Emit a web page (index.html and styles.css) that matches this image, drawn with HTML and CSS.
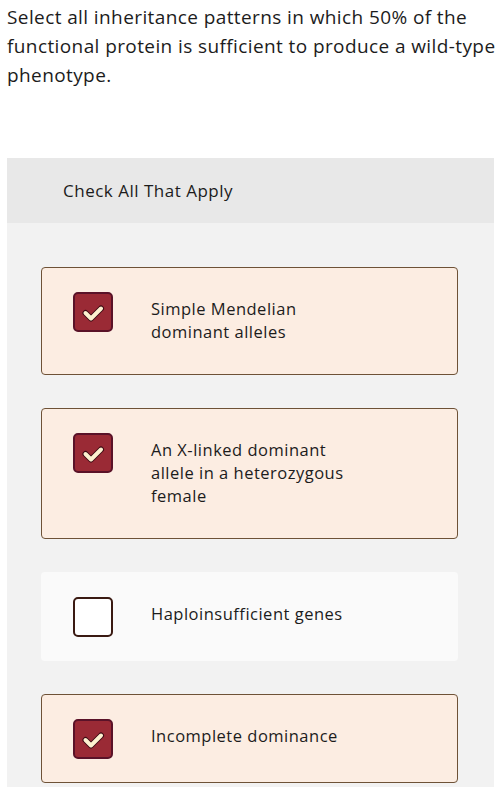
FILE: index.html
```html
<!DOCTYPE html>
<html>
<head>
<meta charset="utf-8">
<link rel="stylesheet" href="styles.css">
</head>
<body>
<p class="question">Select all inheritance patterns in which 50% of the<br>functional protein is sufficient to produce a wild-type<br>phenotype.</p>
<section class="panel">
  <div class="panel-head">Check All That Apply</div>
  <div class="panel-body">
    <div class="option checked">
      <span class="box"><svg viewBox="0 0 40 40" width="40" height="40"><polyline points="12.5,21 18,26.5 28,16.5" fill="none" stroke="#3b0a14" stroke-width="6" stroke-linecap="round" stroke-linejoin="round"/><polyline points="12.5,21 18,26.5 28,16.5" fill="none" stroke="#fdf1cf" stroke-width="4" stroke-linecap="round" stroke-linejoin="round"/></svg></span>
      <span class="label">Simple Mendelian<br>dominant alleles</span>
    </div>
    <div class="option checked">
      <span class="box"><svg viewBox="0 0 40 40" width="40" height="40"><polyline points="12.5,21 18,26.5 28,16.5" fill="none" stroke="#3b0a14" stroke-width="6" stroke-linecap="round" stroke-linejoin="round"/><polyline points="12.5,21 18,26.5 28,16.5" fill="none" stroke="#fdf1cf" stroke-width="4" stroke-linecap="round" stroke-linejoin="round"/></svg></span>
      <span class="label">An X-linked dominant<br>allele in a heterozygous<br>female</span>
    </div>
    <div class="option">
      <span class="box"></span>
      <span class="label">Haploinsufficient genes</span>
    </div>
    <div class="option checked">
      <span class="box"><svg viewBox="0 0 40 40" width="40" height="40"><polyline points="12.5,21 18,26.5 28,16.5" fill="none" stroke="#3b0a14" stroke-width="6" stroke-linecap="round" stroke-linejoin="round"/><polyline points="12.5,21 18,26.5 28,16.5" fill="none" stroke="#fdf1cf" stroke-width="4" stroke-linecap="round" stroke-linejoin="round"/></svg></span>
      <span class="label">Incomplete dominance</span>
    </div>
  </div>
</section>
</body>
</html>
```
FILE: styles.css
```css
html, body {
  margin: 0;
  padding: 0;
  background: #ffffff;
}
body {
  font-family: "Open Sans", "Liberation Sans", sans-serif;
  font-variant-ligatures: none;
  color: #1c1c1c;
  overflow: hidden;
  height: 787px;
}
.question {
  margin: 0;
  padding: 3px 0 0 7px;
  font-size: 19px;
  letter-spacing: 0.4px;
  line-height: 29px;
  height: 158px;
  box-sizing: border-box;
  white-space: nowrap;
}
.panel {
  margin: 0 4px 0 7px;
  background: #f2f2f2;
}
.panel-head {
  background: #e8e8e8;
  height: 65px;
  display: flex;
  align-items: center;
  padding-left: 56px;
  font-size: 17px;
  letter-spacing: 0.5px;
}
.panel-body {
  padding: 44px 36px 20px 34px;
  display: flex;
  flex-direction: column;
  gap: 33px;
}
.option {
  display: flex;
  align-items: flex-start;
  padding: 23px 24px 23px 31px;
  background: #fafafa;
  border: 1px solid transparent;
  border-radius: 4px;
}
.option.checked {
  background: #fcede2;
  border-color: #6e5237;
}
.box {
  flex: none;
  width: 40px;
  height: 40px;
  box-sizing: border-box;
  margin-top: 1px;
  border: 2px solid #3a1a12;
  border-radius: 5px;
  background: #ffffff;
  position: relative;
}
.option.checked .box {
  background: #9a2a35;
  border-color: #5a1228;
}
.box svg {
  position: absolute;
  left: -2px;
  top: -2px;
}
.label {
  margin-left: 38px;
  padding: 6px 0 8px 0;
  font-size: 16.5px;
  letter-spacing: 0.5px;
  line-height: 23px;
}
```
